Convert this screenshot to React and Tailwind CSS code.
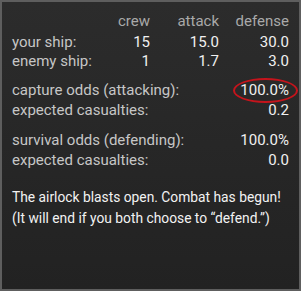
export default function App() {
  const font = { fontFamily: 'Roboto, "Noto Sans", sans-serif' };
  return (
    <div className="w-[301px] h-[291px] border-2 border-[#5e5e5e] bg-gradient-to-b from-[#2c2c2c] to-[#222222] px-[10px] pt-[10px] text-[15px] whitespace-nowrap" style={font}>
      <div className="grid grid-cols-[1fr_58px_69px_70px] h-[21px] leading-[19px] text-[#a9a9a9]">
        <span></span>
        <span className="text-right">crew</span>
        <span className="text-right">attack</span>
        <span className="text-right">defense</span>
      </div>
      <div className="grid grid-cols-[1fr_58px_69px_70px] h-[19px] leading-[19px]">
        <span className="text-[#c6c6c6]">your ship:</span>
        <span className="text-right text-[#f0f0f0]">15</span>
        <span className="text-right text-[#f0f0f0]">15.0</span>
        <span className="text-right text-[#f0f0f0]">30.0</span>
      </div>
      <div className="grid grid-cols-[1fr_58px_69px_70px] h-[19px] leading-[19px]">
        <span className="text-[#c6c6c6]">enemy ship:</span>
        <span className="text-right text-[#f0f0f0]">1</span>
        <span className="text-right text-[#f0f0f0]">1.7</span>
        <span className="text-right text-[#f0f0f0]">3.0</span>
      </div>
      <div className="mt-[10px] flex justify-between h-[20px] leading-[19px]">
        <span className="text-[#c6c6c6]">capture odds (attacking):</span>
        <span className="relative text-[#f0f0f0]">
          100.0%
          <span className="absolute left-[-7px] right-[-9px] top-[-3px] bottom-[-2px] rounded-[50%] border-2 border-[#c4141c]"></span>
        </span>
      </div>
      <div className="flex justify-between h-[20px] leading-[19px]">
        <span className="text-[#c6c6c6]">expected casualties:</span>
        <span className="text-[#f0f0f0]">0.2</span>
      </div>
      <div className="mt-[10px] flex justify-between h-[20px] leading-[19px]">
        <span className="text-[#c6c6c6]">survival odds (defending):</span>
        <span className="text-[#f0f0f0]">100.0%</span>
      </div>
      <div className="flex justify-between h-[20px] leading-[19px]">
        <span className="text-[#c6c6c6]">expected casualties:</span>
        <span className="text-[#f0f0f0]">0.0</span>
      </div>
      <p className="mt-[16px] leading-[21px] text-[13.8px] text-[#f2f2f2]">
        The airlock blasts open. Combat has begun!<br />
        (It will end if you both choose to “defend.”)
      </p>
    </div>
  );
}
